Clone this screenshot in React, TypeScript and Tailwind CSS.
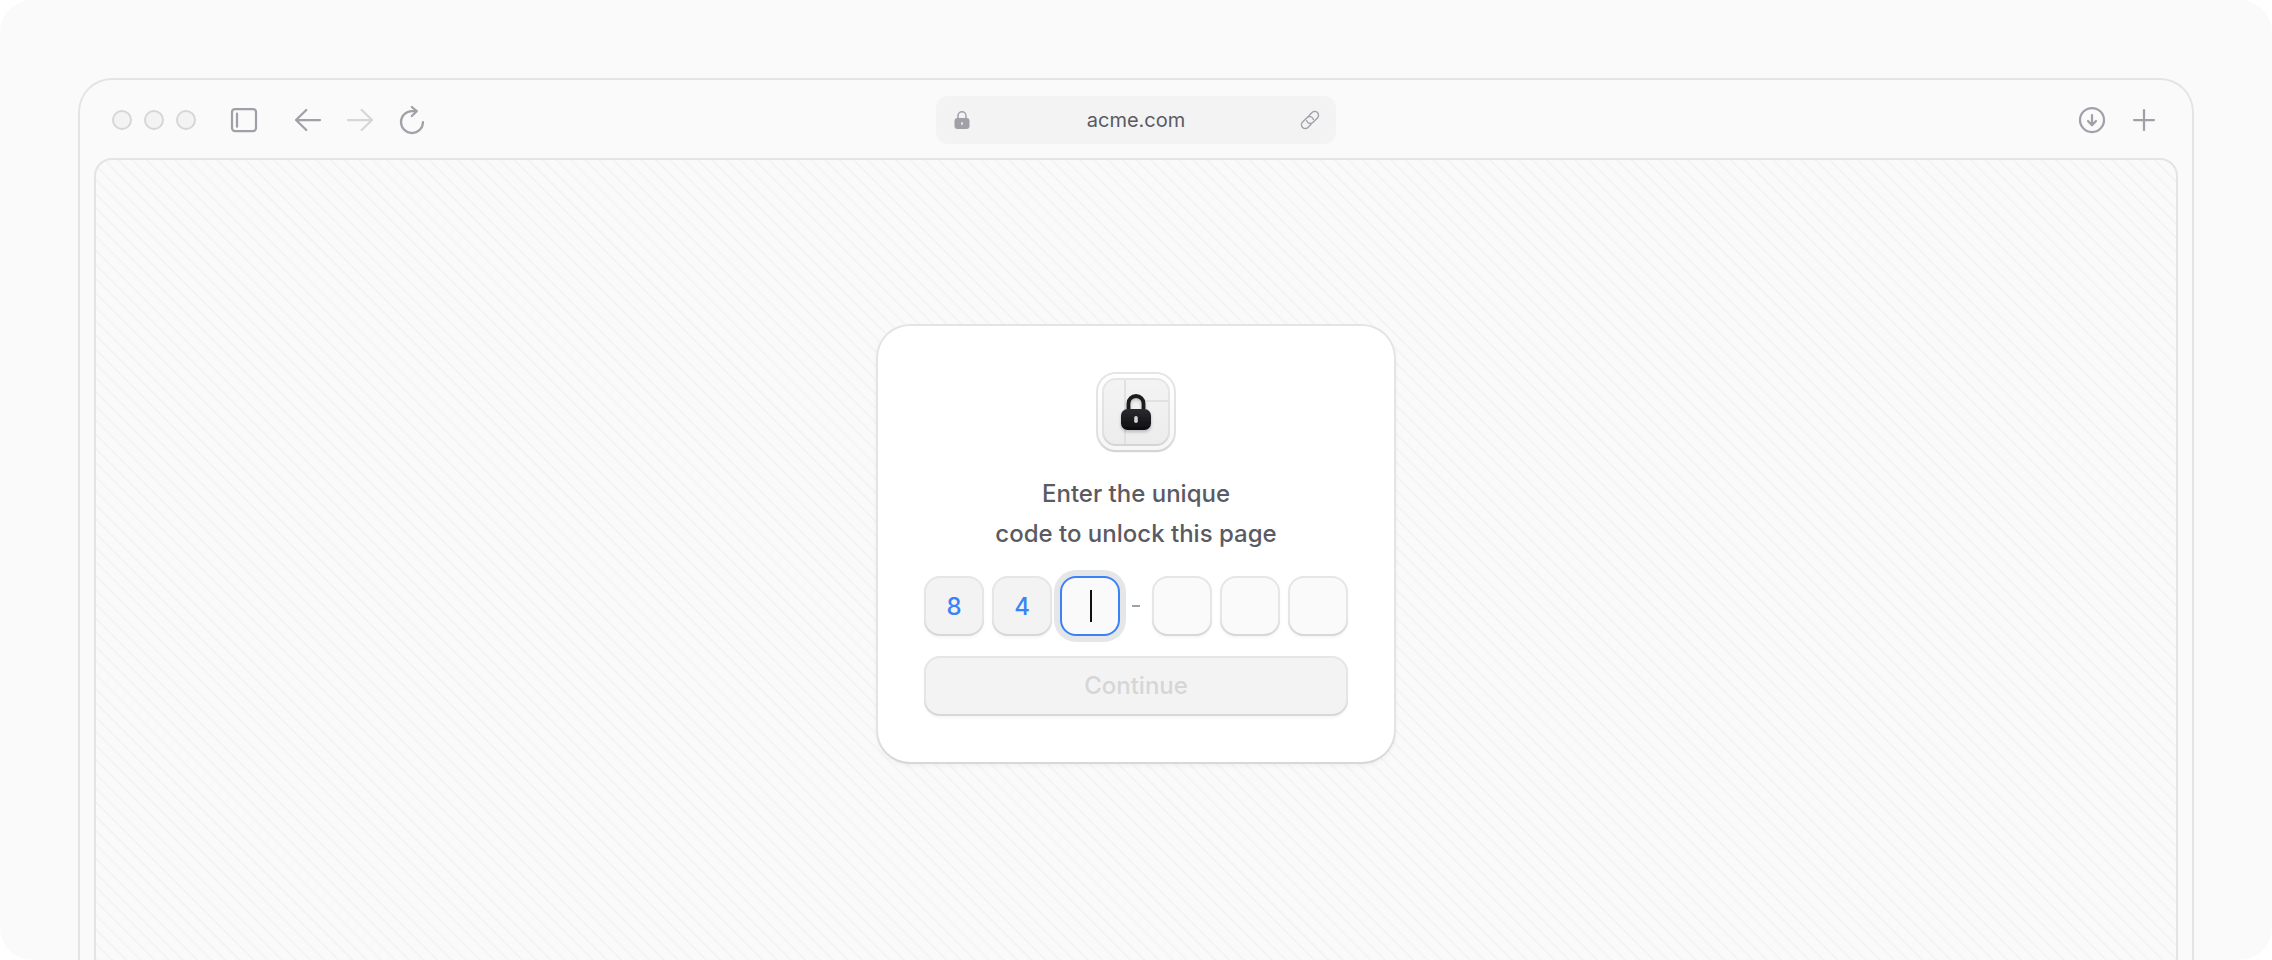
import React from 'react';

const digits = ['8', '4', '', '', '', ''];

const keyShadow =
  'shadow-[inset_0_-2px_0_0_#d8d8d9,inset_0_0_0_2px_#e6e6e7,0_2px_3px_rgba(0,0,0,0.04)]';

type IconProps = {
  children: React.ReactNode;
  className?: string;
};

const Icon: React.FC<IconProps> = ({ children, className = 'text-[#a0a0a8]' }) => (
  <svg
    viewBox="0 0 32 32"
    className={`size-8 ${className}`}
    fill="none"
    stroke="currentColor"
    strokeWidth="2.25"
    strokeLinecap="round"
    strokeLinejoin="round"
    aria-hidden="true"
  >
    {children}
  </svg>
);

const Toolbar: React.FC = () => (
  <header className="grid h-20 grid-cols-[1fr_400px_1fr] items-center px-4.5">
    <div className="flex items-center">
      <div className="flex gap-3">
        <span className="size-5 rounded-full border-2 border-[#d6d6d8] bg-[#f3f3f3]" />
        <span className="size-5 rounded-full border-2 border-[#d6d6d8] bg-[#f3f3f3]" />
        <span className="size-5 rounded-full border-2 border-[#d6d6d8] bg-[#f3f3f3]" />
      </div>
      <button type="button" aria-label="Toggle sidebar" className="ml-8">
        <Icon>
          <rect x="4" y="5" width="24" height="22" rx="3" />
          <path d="M9 9.700v13" />
        </Icon>
      </button>
      <div className="ml-8 flex gap-5">
        <button type="button" aria-label="Back">
          <Icon>
            <path d="M28 16H4M14.300 6L4 16l10.300 10" />
          </Icon>
        </button>
        <button type="button" aria-label="Forward">
          <Icon className="text-[#d6d6d8]">
            <path d="M4 16h24M17.700 6L28 16l-10.300 10" />
          </Icon>
        </button>
        <button type="button" aria-label="Reload">
          <Icon>
            <path d="M27 18a11 11 0 1 1-11-11h4.700M15.800 3l5 4.200-5 4.800" />
          </Icon>
        </button>
      </div>
    </div>

    <div className="flex h-12 items-center rounded-xl bg-[#f3f3f3] px-4">
      <svg viewBox="0 0 20 20" className="size-5 text-[#a0a0a8]" aria-hidden="true">
        <path d="M6 9V5.800a4 4 0 0 1 8 0V9" fill="none" stroke="currentColor" strokeWidth="1.500" />
        <rect x="2.500" y="8" width="15" height="11" rx="3" fill="currentColor" />
        <rect x="9.200" y="12" width="1.600" height="3" rx="0.800" fill="#f3f3f3" />
      </svg>
      <input
        aria-label="Address"
        defaultValue="acme.com"
        className="min-w-0 flex-1 bg-transparent text-center text-xl text-[#5a5a63] outline-none"
      />
      <button type="button" aria-label="Copy link">
        <svg
          viewBox="0 0 20 20"
          className="size-5 text-[#a0a0a8]"
          fill="none"
          stroke="currentColor"
          strokeWidth="1.400"
          strokeLinecap="round"
          aria-hidden="true"
        >
          <g transform="rotate(-45 10 10)">
            <path d="M7.500 13.800H3.300a3.800 3.800 0 0 1 0-7.600H9.500a3.800 3.800 0 0 1 3.300 5.700" />
            <path d="M12.500 6.200h4.200a3.800 3.800 0 0 1 0 7.600H10.500a3.800 3.800 0 0 1-3.300-5.700" />
          </g>
        </svg>
      </button>
    </div>

    <div className="flex justify-end gap-5">
      <button type="button" aria-label="Downloads">
        <Icon>
          <circle cx="16" cy="16" r="12" />
          <path d="M16 11v10M12 17l4 4.300 4-4.300" />
        </Icon>
      </button>
      <button type="button" aria-label="New tab">
        <Icon>
          <path d="M16 6v20M6 16h20" />
        </Icon>
      </button>
    </div>
  </header>
);

const LockBadge: React.FC = () => (
  <svg viewBox="0 0 80 80" className="size-20 overflow-visible" aria-hidden="true">
    <defs>
      <linearGradient id="tile" x1="0" y1="0" x2="0" y2="1">
        <stop offset="0" stopColor="#f4f4f5" />
        <stop offset="1" stopColor="#ececed" />
      </linearGradient>
      <linearGradient id="edge" x1="0" y1="0" x2="0" y2="1">
        <stop offset="0" stopColor="#e6e6e7" />
        <stop offset="0.800" stopColor="#e0e0e1" />
        <stop offset="1" stopColor="#d4d4d6" />
      </linearGradient>
      <linearGradient id="plate" x1="0" y1="0" x2="0" y2="1">
        <stop offset="0" stopColor="#ffffff" />
        <stop offset="1" stopColor="#f6f6f7" />
      </linearGradient>
      <linearGradient id="body" x1="0" y1="0" x2="0" y2="1">
        <stop offset="0" stopColor="#2c2c30" />
        <stop offset="1" stopColor="#0c0c0e" />
      </linearGradient>
      <filter id="soft" x="-50%" y="-50%" width="200%" height="200%">
        <feDropShadow dx="0" dy="2" stdDeviation="1.500" floodColor="#18181b" floodOpacity="0.250" />
      </filter>
    </defs>
    <rect x="1" y="3" width="78" height="78" rx="19" fill="#000" opacity="0.040" />
    <rect x="1" y="1" width="78" height="78" rx="19" fill="url(#plate)" stroke="url(#edge)" strokeWidth="2" />
    <rect x="7" y="7" width="66" height="66" rx="13" fill="url(#tile)" stroke="url(#edge)" strokeWidth="2" />
    <path d="M29 8v64M47 29h25" stroke="#dcdcdd" strokeWidth="1.500" />
    <g filter="url(#soft)">
      <path d="M32.500 39v-7.500a7.500 7.500 0 0 1 15 0V39" fill="none" stroke="#1c1c1f" strokeWidth="3.800" />
      <rect x="25" y="37" width="30" height="21" rx="6.500" fill="url(#body)" />
    </g>
    <rect x="38.200" y="44" width="3.600" height="7" rx="1.800" fill="#d4d4d8" />
  </svg>
);

const CodeInput: React.FC<{ index: number; value: string }> = ({ index, value }) => {
  if (index === 2) {
    return (
      <div className="relative">
        <input
          aria-label={`Digit ${index + 1}`}
          defaultValue={value}
          maxLength={1}
          className="block size-15 rounded-2xl border-2 border-[#3b82f6] bg-[#fafafa] text-center text-2xl font-medium text-[#3b82f6] caret-transparent shadow-[0_0_0_6px_#e4e6e8] outline-none"
        />
        <span className="absolute inset-y-3.5 left-7.5 w-0.5 bg-[#111113]" />
      </div>
    );
  }
  return (
    <input
      aria-label={`Digit ${index + 1}`}
      defaultValue={value}
      maxLength={1}
      className={`size-15 rounded-2xl text-center text-2xl font-medium text-[#3b82f6] outline-none ${keyShadow} ${
        value ? 'bg-[#f3f3f3]' : 'bg-[#fafafa]'
      }`}
    />
  );
};

const UnlockCard: React.FC = () => (
  <form className="flex w-130 flex-col items-center rounded-[34px] bg-white p-12 shadow-[inset_0_-2px_0_0_#d8d8d9,inset_0_0_0_2px_#e4e4e5,0_2px_4px_rgba(0,0,0,0.04)]">
    <LockBadge />
    <h1 className="my-5.5 text-center text-2xl/10 font-medium text-[#5a5a63]">
      Enter the unique
      <br />
      code to unlock this page
    </h1>
    <div className="flex w-full items-center justify-between">
      <div className="flex gap-2">
        {digits.slice(0, 3).map((value, i) => (
          <CodeInput key={i} index={i} value={value} />
        ))}
      </div>
      <span className="h-0.5 w-2 bg-[#a0a0a8]" />
      <div className="flex gap-2">
        {digits.slice(3).map((value, i) => (
          <CodeInput key={i} index={i + 3} value={value} />
        ))}
      </div>
    </div>
    <button
      type="button"
      disabled
      className={`mt-5 h-15 w-full rounded-2xl bg-[#f3f3f3] text-2xl font-medium text-[#d6d6d8] ${keyShadow}`}
    >
      Continue
    </button>
  </form>
);

export default function App() {
  return (
    <div className="bg-white font-['Inter',sans-serif]">
      <main className="flex h-screen flex-col overflow-hidden rounded-[32px] bg-[#fafafa] px-19.5 pt-19.5">
        <div className="flex flex-1 flex-col rounded-t-[34px] border-2 border-b-0 border-[#e4e4e5] px-3.5">
          <Toolbar />
          <section className="-mt-0.5 flex flex-1 items-start justify-center rounded-t-[18px] border-2 border-b-0 border-[#e4e4e5] bg-[repeating-linear-gradient(45deg,transparent_0px,#f4f4f4_1px,#f4f4f4_2px,transparent_3px,transparent_10px)] pt-41">
            <UnlockCard />
          </section>
        </div>
      </main>
    </div>
  );
}
